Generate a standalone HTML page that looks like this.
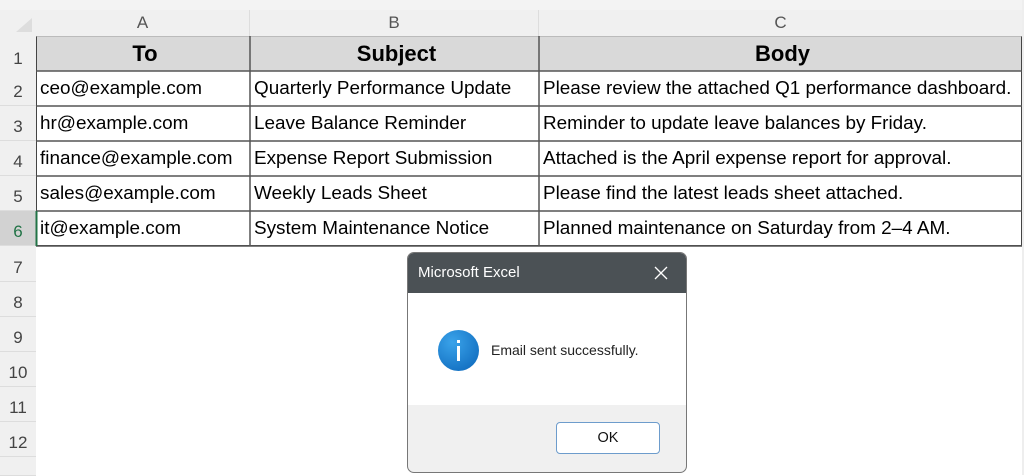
<!DOCTYPE html><html><head><style>
body{margin:0;width:1024px;height:475px;overflow:hidden;background:#fff;font-family:"Liberation Sans",sans-serif;position:relative}
.a{position:absolute}
.rh{position:absolute;left:0;width:36px;background:#f0f0f0;color:#444;font-size:17px;text-align:center;border-bottom:1px solid #ddd}
.ch{position:absolute;top:10px;height:26px;background:#f0f0f0;color:#555;font-size:17px;text-align:center;line-height:26px;border-right:1px solid #ddd}
.c{position:absolute;box-sizing:border-box;font-size:18.9px;color:#000;padding-left:4px;white-space:nowrap}
</style></head><body>
<div class="a" style="left:0;top:0;width:1024px;height:10px;background:#f3f3f3"></div>
<div class="a" style="left:0;top:10px;width:36px;height:26px;background:#f0f0f0"></div>
<div class="a" style="left:16px;top:18px;width:0;height:0;border-left:16px solid transparent;border-bottom:14px solid #ddd"></div>
<div class="ch" style="left:36px;width:213px">A</div>
<div class="ch" style="left:250px;width:288px">B</div>
<div class="ch" style="left:539px;width:483px">C</div>
<div class="a" style="left:1022px;top:0;width:2px;height:475px;background:#eee"></div>
<div class="a" style="left:36px;top:36px;width:986px;height:35px;background:#d9d9d9"></div>
<div class="rh" style="top:36px;height:35px;line-height:46px">1</div>
<div class="rh" style="top:71px;height:34px;line-height:42px">2</div>
<div class="rh" style="top:106px;height:34px;line-height:42px">3</div>
<div class="rh" style="top:141px;height:34px;line-height:42px">4</div>
<div class="rh" style="top:176px;height:34px;line-height:42px">5</div>
<div class="rh" style="top:211px;height:34px;line-height:42px;background:#d2d2d2;color:#217346">6</div>
<div class="rh" style="top:246px;height:35px;line-height:44px">7</div>
<div class="rh" style="top:282px;height:34px;line-height:42px">8</div>
<div class="rh" style="top:317px;height:34px;line-height:42px">9</div>
<div class="rh" style="top:352px;height:34px;line-height:42px">10</div>
<div class="rh" style="top:387px;height:34px;line-height:42px">11</div>
<div class="rh" style="top:422px;height:34px;line-height:42px">12</div>
<div class="rh" style="top:457px;height:18px"></div>
<div class="a" style="left:36px;top:36px;width:986px;height:210px;box-sizing:border-box;border:1px solid #444;border-top:1px solid #bbb"></div>
<svg class="a" style="left:0;top:0" width="1024" height="475">
<g stroke="#555" stroke-width="1.5">
<line x1="36" y1="71" x2="1022" y2="71"/><line x1="36" y1="106" x2="1022" y2="106"/><line x1="36" y1="141" x2="1022" y2="141"/><line x1="36" y1="176" x2="1022" y2="176"/><line x1="36" y1="211" x2="1022" y2="211"/><line x1="36" y1="246" x2="1022" y2="246"/>
<line x1="250" y1="36" x2="250" y2="246"/><line x1="539" y1="36" x2="539" y2="246"/>
</g>
<line x1="36.5" y1="211" x2="36.5" y2="246" stroke="#217346" stroke-width="2"/>
</svg>
<div class="c" style="left:36px;top:36px;width:214px;height:35px;line-height:36px;text-align:center;font-weight:bold;font-size:22px">To</div>
<div class="c" style="left:250px;top:36px;width:289px;height:35px;line-height:36px;text-align:center;font-weight:bold;font-size:22px">Subject</div>
<div class="c" style="left:539px;top:36px;width:483px;height:35px;line-height:36px;text-align:center;font-weight:bold;font-size:22px">Body</div>
<div class="c" style="left:36px;top:71px;line-height:36px">ceo@example.com</div>
<div class="c" style="left:36px;top:106px;line-height:36px">hr@example.com</div>
<div class="c" style="left:36px;top:141px;line-height:36px">finance@example.com</div>
<div class="c" style="left:36px;top:176px;line-height:36px">sales@example.com</div>
<div class="c" style="left:36px;top:211px;line-height:36px">it@example.com</div>
<div class="c" style="left:250px;top:71px;line-height:36px">Quarterly Performance Update</div>
<div class="c" style="left:250px;top:106px;line-height:36px">Leave Balance Reminder</div>
<div class="c" style="left:250px;top:141px;line-height:36px">Expense Report Submission</div>
<div class="c" style="left:250px;top:176px;line-height:36px">Weekly Leads Sheet</div>
<div class="c" style="left:250px;top:211px;line-height:36px">System Maintenance Notice</div>
<div class="c" style="left:539px;top:71px;line-height:36px">Please review the attached Q1 performance dashboard.</div>
<div class="c" style="left:539px;top:106px;line-height:36px">Reminder to update leave balances by Friday.</div>
<div class="c" style="left:539px;top:141px;line-height:36px">Attached is the April expense report for approval.</div>
<div class="c" style="left:539px;top:176px;line-height:36px">Please find the latest leads sheet attached.</div>
<div class="c" style="left:539px;top:211px;line-height:36px">Planned maintenance on Saturday from 2–4 AM.</div>
<div class="a" style="left:407px;top:252px;width:278px;height:219px;border:1px solid #777;border-radius:7px;overflow:hidden;background:#f0f0f0">
 <div class="a" style="left:0;top:0;width:278px;height:40px;background:#4b5155;color:#fff;font-size:15px;line-height:40px;padding-left:10px;box-sizing:border-box">Microsoft Excel</div>
 <svg class="a" style="left:246px;top:13px" width="14" height="14"><path d="M1 1L13 13M13 1L1 13" stroke="#fff" stroke-width="1.3"/></svg>
 <div class="a" style="left:0;top:40px;width:278px;height:112px;background:#fff"></div>
 <div class="a" style="left:30px;top:77px;width:41px;height:41px;border-radius:50%;background:radial-gradient(circle at 35% 30%,#3aa3ea,#0a64b8)"></div>
 <div class="a" style="left:49px;top:87px;width:2.5px;height:3px;background:#fff"></div>
 <div class="a" style="left:49px;top:93px;width:2.5px;height:15px;background:#fff"></div>
 <div class="a" style="left:83px;top:89px;font-size:14px;color:#222">Email sent successfully.</div>
 <div class="a" style="left:148px;top:169px;width:104px;height:32px;border:1px solid #6d9ccc;border-radius:4px;background:#fff;box-sizing:border-box;text-align:center;line-height:30px;font-size:14.5px;color:#111">OK</div>
</div>
</body></html>
